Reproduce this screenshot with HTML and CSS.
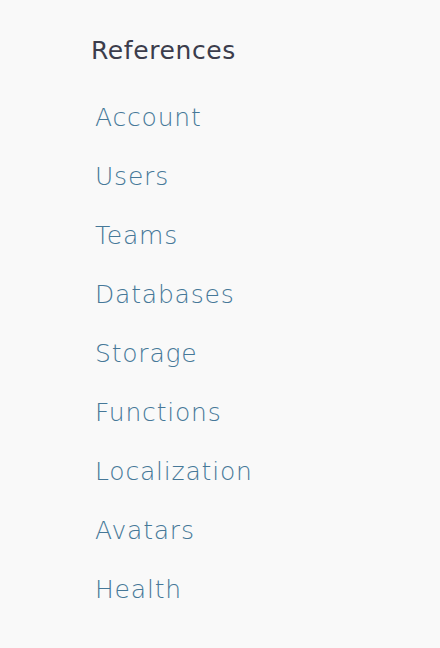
FILE: index.html
```html
<!DOCTYPE html>
<html>
<head>
<meta charset="utf-8">
<link rel="stylesheet" href="styles.css">
</head>
<body>
<nav class="refs">
  <h2 class="refs-title">References</h2>
  <ul class="refs-list">
    <li><a href="#">Account</a></li>
    <li><a href="#">Users</a></li>
    <li><a href="#">Teams</a></li>
    <li><a href="#">Databases</a></li>
    <li><a href="#">Storage</a></li>
    <li><a href="#">Functions</a></li>
    <li><a href="#">Localization</a></li>
    <li><a href="#">Avatars</a></li>
    <li><a href="#">Health</a></li>
  </ul>
</nav>
</body>
</html>
```

FILE: styles.css
```css
html, body {
  margin: 0;
  padding: 0;
  background: #f9f9f9;
  height: 100%;
}
body {
  font-family: "DejaVu Sans", "Liberation Sans", sans-serif;
}
.refs {
  padding: 34px 0 0 91px;
}
.refs-title {
  margin: 0;
  font-size: 25px;
  font-weight: 400;
  letter-spacing: 0.6px;
  color: #3c3d4c;
  line-height: 34px;
}
.refs-list {
  list-style: none;
  margin: 33px 0 0 0;
  padding: 0 0 0 4px;
  display: flex;
  flex-direction: column;
  gap: 25px;
}
.refs-list li {
  font-size: 25px;
  line-height: 34px;
  height: 34px;
}
.refs-list a {
  font-weight: 200;
  letter-spacing: 0.8px;
  color: #467898;
  text-decoration: none;
}
```
